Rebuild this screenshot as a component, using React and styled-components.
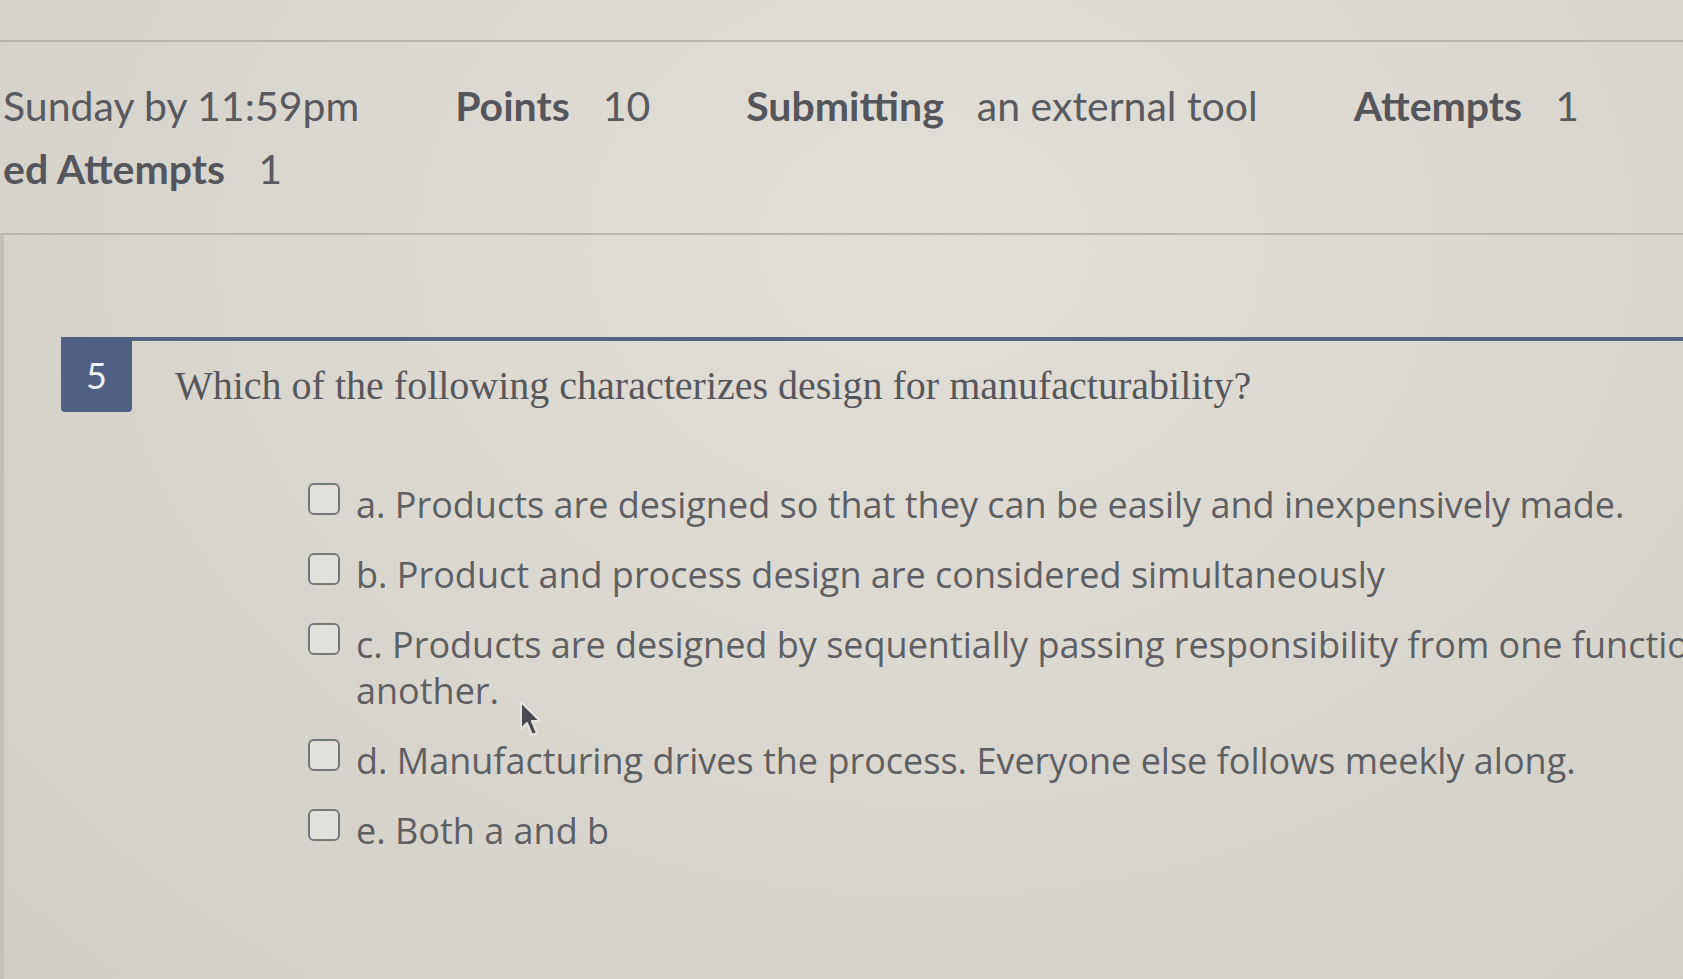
import React from 'react';
import styled, { createGlobalStyle } from 'styled-components';

const GlobalStyle = createGlobalStyle`
  html, body {
    margin: 0;
    padding: 0;
    width: 1683px;
    height: 979px;
    overflow: hidden;
  }
  body {
    background: radial-gradient(ellipse at 55% 25%, #e1ded7 0%, #dbd8d1 45%, #d0cdc6 100%);
    font-family: 'Open Sans', 'Liberation Sans', sans-serif;
  }
`;

const Page = styled.div`
  position: relative;
  width: 1683px;
  height: 979px;
  padding-top: 40px;
  box-sizing: border-box;
`;

const MetaBlock = styled.div`
  border-top: 2px solid #b7b4ae;
  border-bottom: 2px solid #b7b4ae;
  padding: 32px 0 33px 3px;
  font-family: Lato, 'Liberation Sans', sans-serif;
  font-size: 41px;
  color: #595a5f;
`;

const MetaRow = styled.div`
  display: flex;
  gap: 96px;
  height: 63px;
  align-items: center;
  white-space: nowrap;
`;

const MetaItem = styled.div`
  display: flex;
  gap: 33px;
`;

const Label = styled.span`
  font-weight: 700;
  color: #55565b;
`;

const Value = styled.span`
  font-weight: 400;
`;

const Body = styled.div`
  border-left: 4px solid #c2bfb9;
  padding: 102px 0 0 57px;
  height: 745px;
  box-sizing: border-box;
`;

const QuestionHeader = styled.div`
  display: flex;
  align-items: flex-start;
  border-top: 4px solid #56637f;
`;

const Badge = styled.div`
  width: 71px;
  height: 75px;
  margin-top: -4px;
  background: #4f6083;
  border-radius: 4px;
  display: flex;
  align-items: center;
  justify-content: center;
  color: #eef0f4;
  font-family: Lato, 'Liberation Sans', sans-serif;
  font-size: 36px;
  font-weight: 400;
  flex-shrink: 0;
`;

const QuestionText = styled.div`
  padding: 22px 0 0 43px;
  font-family: 'Liberation Serif', 'DejaVu Serif', serif;
  font-size: 40px;
  line-height: 46px;
  color: #56575c;
  white-space: nowrap;
`;

const Options = styled.div`
  margin: 70px 0 0 247px;
  display: flex;
  flex-direction: column;
  gap: 24px;
`;

const Option = styled.label`
  display: flex;
  align-items: flex-start;
  gap: 16px;
`;

const Box = styled.span`
  width: 28px;
  height: 28px;
  margin-top: 1px;
  border: 2px solid #75767a;
  border-radius: 6px;
  background: #e2e0db;
  flex-shrink: 0;
`;

const OptionText = styled.span`
  width: 1460px;
  flex-shrink: 0;
  font-size: 36px;
  line-height: 46px;
  color: #5e5f63;
`;

const Cursor = styled.svg`
  position: absolute;
  left: 518px;
  top: 700px;
`;

const meta1 = [
  { label: null, value: 'Sunday by 11:59pm' },
  { label: 'Points', value: '10' },
  { label: 'Submitting', value: 'an external tool' },
  { label: 'Attempts', value: '1' },
];

const options = [
  'a. Products are designed so that they can be easily and inexpensively made.',
  'b. Product and process design are considered simultaneously',
  'c. Products are designed by sequentially passing responsibility from one function to another.',
  'd. Manufacturing drives the process. Everyone else follows meekly along.',
  'e. Both a and b',
];

const App = () => {
  return (
    <>
      <GlobalStyle />
      <Page>
        <MetaBlock>
          <MetaRow>
            {meta1.map((m, i) => (
              <MetaItem key={i}>
                {m.label && <Label>{m.label}</Label>}
                <Value>{m.value}</Value>
              </MetaItem>
            ))}
          </MetaRow>
          <MetaRow>
            <MetaItem>
              <Label>ed Attempts</Label>
              <Value>1</Value>
            </MetaItem>
          </MetaRow>
        </MetaBlock>
        <Body>
          <QuestionHeader>
            <Badge>5</Badge>
            <QuestionText>Which of the following characterizes design for manufacturability?</QuestionText>
          </QuestionHeader>
          <Options>
            {options.map((o) => (
              <Option key={o}>
                <Box />
                <OptionText>{o}</OptionText>
              </Option>
            ))}
          </Options>
        </Body>
        <Cursor width="26" height="40" viewBox="0 0 26 40">
          <path d="M3 2 L3 29 L9 23 L14 35 L19 33 L14 21 L22 21 Z" fill="#4a4b50" stroke="#e6e4df" strokeWidth="2" strokeLinejoin="round" />
        </Cursor>
      </Page>
    </>
  );
};

export default App;
